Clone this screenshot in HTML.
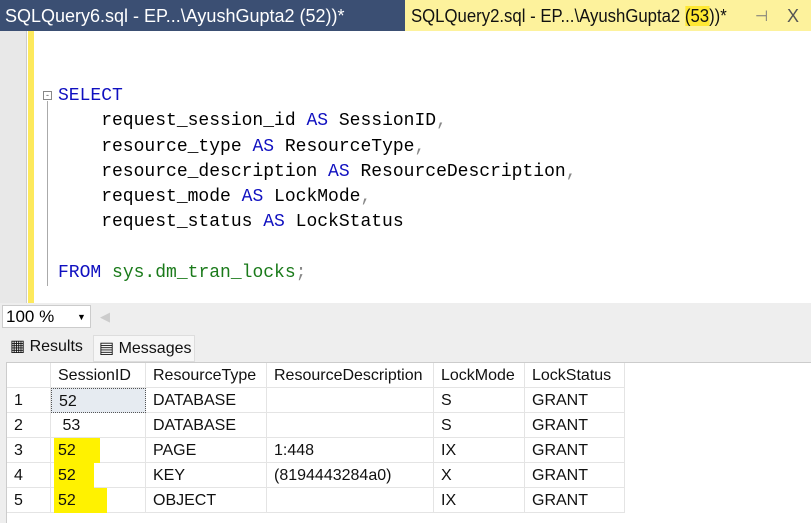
<!DOCTYPE html>
<html><head><meta charset="utf-8"><style>
*{margin:0;padding:0;box-sizing:border-box}
body{width:811px;height:523px;overflow:hidden;background:#fff;position:relative;font-family:"Liberation Sans",sans-serif}
.a{position:absolute;white-space:nowrap}
.code{font-family:"Liberation Mono",monospace;font-size:18px;line-height:25.3px}
.k{color:#1010c0}.g{color:#1a7a1a}
.grid div{position:absolute;font-size:16px;color:#111;height:25px;line-height:25px;padding-left:7px;border-right:1px solid #e4e4e4;border-bottom:1px solid #e4e4e4}
.hl{background:#fff200}
.t{display:inline-block;transform-origin:0 0}
</style></head><body>
<div class="a" style="left:0;top:0;width:405px;height:31px;background:#3b4f73;color:#fff;font-size:18px;line-height:33px;padding-left:5px"><span class="t" style="transform:scaleX(1)">SQLQuery6.sql - EP...\AyushGupta2 (52))*</span></div>
<div class="a" style="left:405px;top:0;width:406px;height:31px;background:#fdf29c;color:#111;font-size:18px;line-height:33px;padding-left:6px"><span class="t" style="transform:scaleX(0.93)">SQLQuery2.sql - EP...\AyushGupta2 <span style="background:#ffe833">(53</span>))*</span><span style="position:absolute;left:350px;color:#777;font-size:15px">⊣</span><span style="position:absolute;left:382px;color:#555">X</span></div>
<div class="a" style="left:0;top:31px;width:27px;height:272px;background:#e8e8e8;border-right:1px solid #ccc"></div>
<div class="a" style="left:28px;top:31px;width:6px;height:272px;background:#fde95c"></div>
<div class="a" style="left:43px;top:91px;width:9px;height:9px;border:1px solid #888;font-size:9px;line-height:6px;text-align:center;color:#555">-</div>
<div class="a" style="left:47px;top:101px;width:1px;height:185px;background:#aaa"></div>
<div class="a code" style="left:58px;top:84px">
<div class="k">SELECT</div>
<div>&nbsp;&nbsp;&nbsp;&nbsp;request_session_id <span class="k">AS</span> SessionID<span style="color:#888">,</span></div>
<div>&nbsp;&nbsp;&nbsp;&nbsp;resource_type <span class="k">AS</span> ResourceType<span style="color:#888">,</span></div>
<div>&nbsp;&nbsp;&nbsp;&nbsp;resource_description <span class="k">AS</span> ResourceDescription<span style="color:#888">,</span></div>
<div>&nbsp;&nbsp;&nbsp;&nbsp;request_mode <span class="k">AS</span> LockMode<span style="color:#888">,</span></div>
<div>&nbsp;&nbsp;&nbsp;&nbsp;request_status <span class="k">AS</span> LockStatus</div>
<div>&nbsp;</div>
<div><span class="k">FROM</span> <span class="g">sys.dm_tran_locks</span><span style="color:#888">;</span></div>
</div>
<div class="a" style="left:0;top:303px;width:811px;height:220px;background:#eeeeee"></div>
<div class="a" style="left:2px;top:305px;width:89px;height:23px;background:#fff;border:1px solid #ccc;font-size:17px;line-height:22px;padding-left:3px">100 %<span style="position:absolute;left:74px;top:0;font-size:9px">▼</span></div>
<div class="a" style="left:100px;top:309px;color:#ccc;font-size:13px">◀</div>
<div class="a" style="left:2px;top:335px;font-size:16px;line-height:24px;padding-left:8px;color:#111">▦ Results</div>
<div class="a" style="left:93px;top:335px;width:102px;height:27px;background:#f6f6f6;border:1px solid #ddd;font-size:16px;line-height:26px;padding-left:5px;color:#111">▤ Messages</div>
<div class="a" style="left:6px;top:362px;width:805px;height:161px;background:#fff;border-left:1px solid #ccc;border-top:1px solid #ccc"></div>
<div class="grid">
<div style="left:7px;top:363px;width:44px"></div>
<div style="left:51px;top:363px;width:95px">SessionID</div>
<div style="left:146px;top:363px;width:121px">ResourceType</div>
<div style="left:267px;top:363px;width:167px">ResourceDescription</div>
<div style="left:434px;top:363px;width:91px">LockMode</div>
<div style="left:525px;top:363px;width:100px">LockStatus</div>

<div style="left:7px;top:388px;width:44px">1</div>
<div style="left:51px;top:388px;width:95px;background:#e6ebf1;border:1px dotted #555">52</div>
<div style="left:146px;top:388px;width:121px">DATABASE</div>
<div style="left:267px;top:388px;width:167px"></div>
<div style="left:434px;top:388px;width:91px">S</div>
<div style="left:525px;top:388px;width:100px">GRANT</div>

<div style="left:7px;top:413px;width:44px">2</div>
<div style="left:51px;top:413px;width:95px">&nbsp;53</div>
<div style="left:146px;top:413px;width:121px">DATABASE</div>
<div style="left:267px;top:413px;width:167px"></div>
<div style="left:434px;top:413px;width:91px">S</div>
<div style="left:525px;top:413px;width:100px">GRANT</div>

<div style="left:7px;top:438px;width:44px">3</div>
<div style="left:51px;top:438px;width:95px"><span class="hl" style="display:inline-block;width:46px;margin-left:-4px;padding-left:4px">52</span></div>
<div style="left:146px;top:438px;width:121px">PAGE</div>
<div style="left:267px;top:438px;width:167px">1:448</div>
<div style="left:434px;top:438px;width:91px">IX</div>
<div style="left:525px;top:438px;width:100px">GRANT</div>

<div style="left:7px;top:463px;width:44px">4</div>
<div style="left:51px;top:463px;width:95px"><span class="hl" style="display:inline-block;width:40px;margin-left:-4px;padding-left:4px">52</span></div>
<div style="left:146px;top:463px;width:121px">KEY</div>
<div style="left:267px;top:463px;width:167px">(8194443284a0)</div>
<div style="left:434px;top:463px;width:91px">X</div>
<div style="left:525px;top:463px;width:100px">GRANT</div>

<div style="left:7px;top:488px;width:44px">5</div>
<div style="left:51px;top:488px;width:95px"><span class="hl" style="display:inline-block;width:53px;margin-left:-4px;padding-left:4px">52</span></div>
<div style="left:146px;top:488px;width:121px">OBJECT</div>
<div style="left:267px;top:488px;width:167px"></div>
<div style="left:434px;top:488px;width:91px">IX</div>
<div style="left:525px;top:488px;width:100px">GRANT</div>
</div>
</body></html>
